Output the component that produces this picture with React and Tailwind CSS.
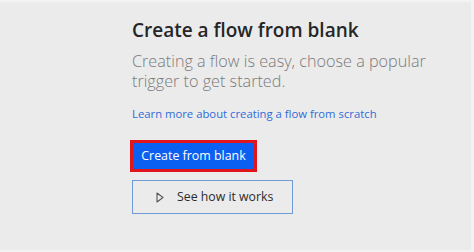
import React from 'react';

const font = { fontFamily: '"Open Sans", "Noto Sans", sans-serif' };

const PlayIcon = () => (
    <svg width="8" height="11" viewBox="0 0 8 11" className="shrink-0">
        <path d="M1 1 L7 5.5 L1 10 Z" fill="none" stroke="#555" strokeWidth="1.1" strokeLinejoin="round" />
    </svg>
);

const App = () => {
    return (
        <div className="w-[474px] h-[252px] bg-[#f3f3f3] pt-[2px] pr-[3px] pb-[2px]" style={font}>
            <div className="h-full bg-[#ebebeb] pl-[132px] pt-[16px] flex flex-col items-start">
                <h1 className="text-[19px] leading-[24px] font-semibold text-[#262626]">Create a flow from blank</h1>
                <p className="mt-[9px] text-[16.2px] leading-[20px] font-light text-[#7a7a7a] w-[325px]">
                    Creating a flow is easy, choose a popular<br />trigger to get started.
                </p>
                <a className="mt-[15px] text-[11.3px] leading-[16px] text-[#2f6bd8]">
                    Learn more about creating a flow from scratch
                </a>
                <button className="mt-[18px] -ml-[2px] w-[127px] h-[32px] border-[3px] border-[#e1161d] bg-[#0b60f1] text-white text-[12.4px] flex items-center justify-center">
                    Create from blank
                </button>
                <button className="mt-[8px] w-[161px] h-[34px] border border-[#6f9ad6] bg-[#ebebeb] text-[#2b2b2b] text-[12.3px] flex items-center pl-[23px] gap-[13px]">
                    <PlayIcon />
                    <span>See how it works</span>
                </button>
            </div>
        </div>
    );
};

export default App;
